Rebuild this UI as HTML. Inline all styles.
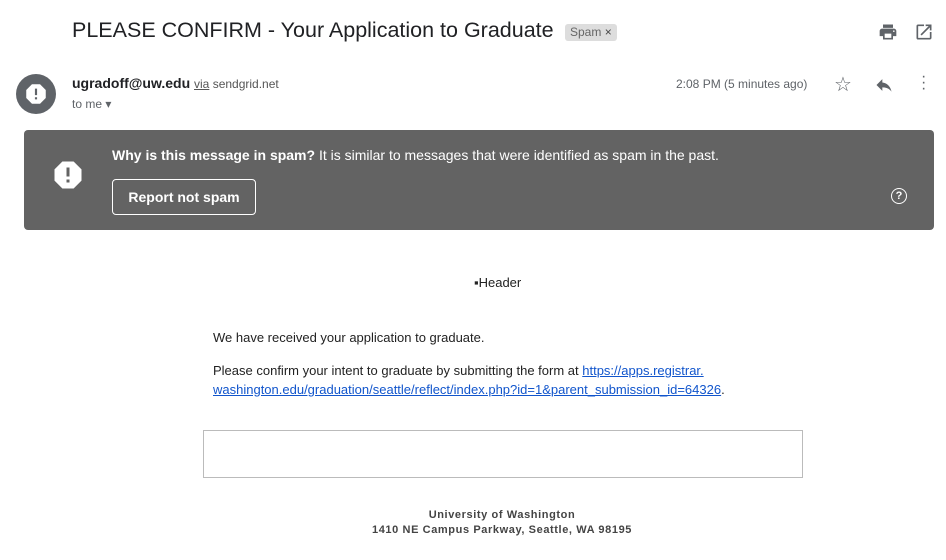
<!DOCTYPE html>
<html><head><style>
body{margin:0;width:946px;height:560px;background:#fff;font-family:"Liberation Sans",Arial,sans-serif;position:relative;overflow:hidden;color:#222}
.a{position:absolute;white-space:nowrap}
</style></head><body>
<div class="a" style="left:72px;top:18px;font-size:21.5px;color:#202124">PLEASE CONFIRM - Your Application to Graduate</div>
<div class="a" style="left:565px;top:24px;height:17px;padding:0 5px;background:#ddd;border-radius:3px;font-size:12px;line-height:17px;color:#666">Spam <span style="color:#444">×</span></div>
<svg class="a" style="left:878px;top:22px" width="20" height="20" viewBox="0 0 24 24"><path fill="#5f6368" d="M19 8H5c-1.66 0-3 1.34-3 3v6h4v4h12v-4h4v-6c0-1.660-1.34-3-3-3zm-3 11H8v-5h8v5zm3-7c-.55 0-1-.45-1-1s.45-1 1-1 1 .45 1 1-.45 1-1 1zm-1-9H6v4h12V3z"/></svg>
<svg class="a" style="left:914px;top:22px" width="20" height="20" viewBox="0 0 24 24"><path fill="#5f6368" d="M19 19H5V5h7V3H5a2 2 0 00-2 2v14a2 2 0 002 2h14c1.1 0 2-.9 2-2v-7h-2v7zM14 3v2h3.59l-9.83 9.83 1.41 1.41L19 6.41V10h2V3h-7z"/></svg>
<div class="a" style="left:16px;top:74px;width:40px;height:40px;border-radius:50%;background:#5f6368"></div>
<svg class="a" style="left:23px;top:81px" width="26" height="26" viewBox="0 0 24 24"><path fill="#fff" d="M15.73 3H8.27L3 8.27v7.46L8.27 21h7.46L21 15.73V8.27L15.73 3zM13 17h-2v-2h2v2zm0-4h-2V7h2v6z"/></svg>
<div class="a" style="left:72px;top:75px;font-size:14px"><b style="color:#202124">ugradoff@uw.edu</b> <span style="font-size:12px;color:#555"><u>via</u> sendgrid.net</span></div>
<div class="a" style="left:72px;top:97px;font-size:12px;color:#5f6368">to me ▾</div>
<div class="a" style="left:676px;top:77px;font-size:12px;color:#5f6368">2:08 PM (5 minutes ago)</div>
<div class="a" style="left:834px;top:72px;font-size:20px;color:#5f6368">☆</div>
<svg class="a" style="left:874px;top:75px" width="20" height="20" viewBox="0 0 24 24"><path fill="#5f6368" d="M10 9V5l-7 7 7 7v-4.1c5 0 8.5 1.6 11 5.1-1-5-4-10-11-11z"/></svg>
<div class="a" style="left:921px;top:74px;font-size:16px;color:#5f6368;line-height:6px">·<br>·<br>·</div>
<div class="a" style="left:24px;top:130px;width:910px;height:100px;background:#636363;border-radius:4px"></div>
<svg class="a" style="left:50px;top:157px" width="36" height="36" viewBox="0 0 24 24"><path fill="#fff" d="M15.73 3H8.27L3 8.27v7.46L8.27 21h7.46L21 15.73V8.27L15.73 3zM13 17h-2v-2h2v2zm0-4h-2V7h2v6z"/></svg>
<div class="a" style="left:112px;top:147px;font-size:14px;color:#fff"><b>Why is this message in spam?</b> It is similar to messages that were identified as spam in the past.</div>
<div class="a" style="left:112px;top:179px;width:142px;height:34px;border:1px solid #fff;border-radius:4px;color:#fff;font-size:14px;line-height:34px;text-align:center;font-weight:bold">Report not spam</div>
<div class="a" style="left:891px;top:188px;width:14px;height:14px;border:1.5px solid #fff;border-radius:50%;color:#fff;font-size:11px;line-height:14px;text-align:center;font-weight:bold">?</div>
<div class="a" style="left:474px;top:275px;font-size:13px">▪Header</div>
<div class="a" style="left:213px;top:330px;font-size:13px">We have received your application to graduate.</div>
<div class="a" style="left:213px;top:361px;font-size:13px;line-height:19px">Please confirm your intent to graduate by submitting the form at <a style="color:#15c" href="#">https://apps.registrar.</a><br><a style="color:#15c" href="#">washington.edu/graduation/seattle/reflect/index.php?id=1&amp;parent_submission_id=64326</a>.</div>
<div class="a" style="left:203px;top:430px;width:598px;height:46px;border:1px solid #bbb"></div>
<div class="a" style="left:0;width:1004px;top:508px;text-align:center;font-size:11px;font-weight:bold;color:#444;line-height:15px;letter-spacing:0.6px">University of Washington<br>1410 NE Campus Parkway, Seattle, WA 98195</div>
</body></html>
